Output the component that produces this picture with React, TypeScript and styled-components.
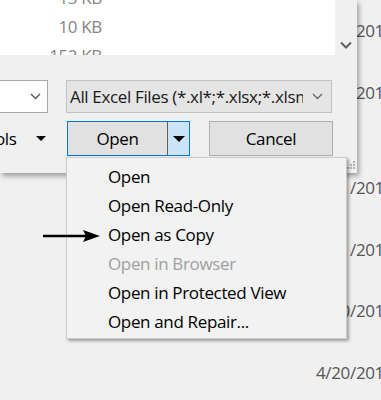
import React from "react";
import styled, { createGlobalStyle } from "styled-components";

const GlobalStyle = createGlobalStyle`
  html, body {
    margin: 0;
    padding: 0;
    background: #f0f0f0;
  }
  body {
    font-family: "Open Sans", "Noto Sans", "Liberation Sans", sans-serif;
    font-size: 17px;
    letter-spacing: -0.35px;
    color: #000;
  }
`;

const Page = styled.div`
  position: relative;
  width: 381px;
  height: 400px;
  overflow: hidden;
  background: #f0f0f0;
`;

/* Background explorer list (dates column) */
const DateColumn = styled.div`
  display: flex;
  flex-direction: column;
  padding-left: 316px;
  padding-top: 18px;
`;

const DateGroup = styled.div<{ $gap?: number }>`
  display: flex;
  flex-direction: column;
  margin-top: ${(p) => p.$gap ?? 0}px;
`;

const DateCell = styled.div`
  height: 61.5px;
  line-height: 26px;
  color: #555555;
  white-space: nowrap;
`;

/* Dialog */
const Dialog = styled.div`
  position: absolute;
  left: 0;
  top: 0;
  width: 357px;
  height: 173px;
  background: #f0f0f0;
  box-shadow: 2px 3px 5px rgba(0, 0, 0, 0.35);
  display: flex;
  flex-direction: column;
`;

const ListArea = styled.div`
  display: flex;
  height: 55px;
`;

const FileList = styled.div`
  width: 335px;
  background: #ffffff;
  overflow: hidden;
  display: flex;
  flex-direction: column;
`;

const SizeRows = styled.div`
  margin-top: -17px;
  width: 102px;
  display: flex;
  flex-direction: column;
`;

const SizeCell = styled.div`
  height: 29px;
  line-height: 29px;
  text-align: right;
  color: #858585;
`;

const ScrollBar = styled.div`
  flex: 1;
  display: flex;
  flex-direction: column;
  justify-content: flex-end;
  align-items: center;
  padding-bottom: 6px;
`;

const ControlRow = styled.div<{ $top: number; $height: number }>`
  display: flex;
  align-items: stretch;
  margin-top: ${(p) => p.$top}px;
  height: ${(p) => p.$height}px;
`;

const NameCombo = styled.div`
  width: 49px;
  margin-left: -1px;
  box-sizing: border-box;
  background: #ffffff;
  border: 1px solid #a8a8a8;
  display: flex;
  align-items: center;
  justify-content: flex-end;
  padding-right: 6px;
`;

const TypeCombo = styled.div`
  margin-left: 18px;
  width: 266px;
  box-sizing: border-box;
  background: #e5e5e5;
  border: 1px solid #c2c2c2;
  display: flex;
  align-items: center;
  padding-left: 3px;
  padding-right: 8px;
  gap: 9px;
`;

const ComboText = styled.span`
  flex: 1;
  overflow: hidden;
  white-space: nowrap;
  color: #1a1a1a;
`;

const ToolsLabel = styled.div`
  width: 67px;
  display: flex;
  align-items: center;
  gap: 20px;
  color: #000;
`;

const ToolsText = styled.span`
  margin-left: -15px;
`;

const SplitButton = styled.div`
  width: 123px;
  box-sizing: border-box;
  border: 1px solid #0078d7;
  display: flex;
`;

const SplitMain = styled.div`
  flex: 1;
  background: #e1e1e1;
  display: flex;
  align-items: center;
  justify-content: center;
  border-right: 1px solid #5f5f5f;
`;

const SplitArrow = styled.div`
  width: 21px;
  background: #cce4f7;
  display: flex;
  align-items: center;
  justify-content: center;
`;

const PushButton = styled.div`
  margin-left: 19px;
  width: 124px;
  box-sizing: border-box;
  background: #e1e1e1;
  border: 1px solid #adadad;
  display: flex;
  align-items: center;
  justify-content: center;
`;

const Grip = styled.svg`
  position: absolute;
  right: 1px;
  bottom: 3px;
`;

/* Drop-down menu */
const Menu = styled.div`
  position: absolute;
  left: 66px;
  top: 157px;
  width: 281px;
  height: 182px;
  box-sizing: border-box;
  background: #f2f2f2;
  border: 1px solid #cccccc;
  box-shadow: 2px 2px 3px rgba(0, 0, 0, 0.35);
  padding-top: 4px;
  display: flex;
  flex-direction: column;
`;

const MenuItem = styled.div<{ $disabled?: boolean }>`
  height: 29px;
  line-height: 29px;
  padding-left: 41px;
  white-space: nowrap;
  color: ${(p) => (p.$disabled ? "#a0a0a0" : "#000")};
`;

const Pointer = styled.svg`
  position: absolute;
  left: 42px;
  top: 228px;
`;

const Chevron = ({ color = "#555" }: { color?: string }) => (
  <svg width="11" height="7" viewBox="0 0 11 7">
    <path d="M1 1 L5.5 5.5 L10 1" fill="none" stroke={color} strokeWidth="1.3" />
  </svg>
);

const Triangle = ({ w, h }: { w: number; h: number }) => (
  <svg width={w} height={h} viewBox={`0 0 ${w} ${h}`}>
    <path d={`M0 0 L${w} 0 L${w / 2} ${h} Z`} fill="#000" />
  </svg>
);

const menuItems: { label: string; disabled?: boolean }[] = [
  { label: "Open" },
  { label: "Open Read-Only" },
  { label: "Open as Copy" },
  { label: "Open in Browser", disabled: true },
  { label: "Open in Protected View" },
  { label: "Open and Repair..." },
];

export default function App() {
  return (
    <Page>
      <GlobalStyle />
      <DateColumn>
        <DateGroup>
          <DateCell>4/21/2017</DateCell>
          <DateCell>4/21/2017</DateCell>
        </DateGroup>
        <DateGroup $gap={34}>
          <DateCell>4/21/2017</DateCell>
          <DateCell>4/21/2017</DateCell>
          <DateCell>4/20/2017</DateCell>
          <DateCell>4/20/2017</DateCell>
        </DateGroup>
      </DateColumn>

      <Dialog>
        <ListArea>
          <FileList>
            <SizeRows>
              <SizeCell>13 KB</SizeCell>
              <SizeCell>10 KB</SizeCell>
              <SizeCell>152 KB</SizeCell>
            </SizeRows>
          </FileList>
          <ScrollBar>
            <svg width="12" height="8" viewBox="0 0 12 8">
              <path d="M1 1.5 L6 6.5 L11 1.5" fill="none" stroke="#606060" strokeWidth="2" />
            </svg>
          </ScrollBar>
        </ListArea>

        <ControlRow $top={25} $height={33}>
          <NameCombo>
            <Chevron />
          </NameCombo>
          <TypeCombo>
            <ComboText>All Excel Files (*.xl*;*.xlsx;*.xlsm;*.xlsb;*.xlam)</ComboText>
            <Chevron color="#666" />
          </TypeCombo>
        </ControlRow>

        <ControlRow $top={8} $height={35}>
          <ToolsLabel>
            <ToolsText>ools</ToolsText>
            <Triangle w={10} h={5} />
          </ToolsLabel>
          <SplitButton>
            <SplitMain>Open</SplitMain>
            <SplitArrow>
              <Triangle w={12} h={6} />
            </SplitArrow>
          </SplitButton>
          <PushButton>Cancel</PushButton>
        </ControlRow>

        <Grip width="9" height="9" viewBox="0 0 9 9">
          <g fill="#b4b4b4">
            <rect x="6" y="0" width="2" height="2" />
            <rect x="3" y="3" width="2" height="2" />
            <rect x="6" y="3" width="2" height="2" />
            <rect x="0" y="6" width="2" height="2" />
            <rect x="3" y="6" width="2" height="2" />
            <rect x="6" y="6" width="2" height="2" />
          </g>
        </Grip>
      </Dialog>

      <Menu>
        {menuItems.map((m) => (
          <MenuItem key={m.label} $disabled={m.disabled}>
            {m.label}
          </MenuItem>
        ))}
      </Menu>

      <Pointer width="60" height="16" viewBox="0 0 60 16">
        <path d="M1 8 L46 8" stroke="#000" strokeWidth="2.6" />
        <path d="M41 2 L58 8 L41 14 L44 8 Z" fill="#000" />
      </Pointer>
    </Page>
  );
}
